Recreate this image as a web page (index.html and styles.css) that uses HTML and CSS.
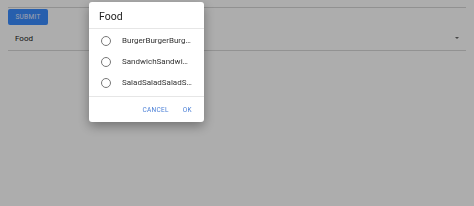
FILE: index.html
```html
<!DOCTYPE html>
<html lang="en">
<head>
    <meta charset="UTF-8">
    <title>Food picker</title>
    <link rel="stylesheet" href="styles.css">
</head>
<body>

<div class="page">
    <div class="toolbar">
        <button class="submit">Submit</button>
    </div>
    <div class="select-row">
        <span class="select-value">Food</span>
        <span class="select-arrow"></span>
    </div>
</div>

<!-- Dialog sopra la pagina -->
<div class="backdrop">
    <div class="dialog">
        <div class="dialog-title">Food</div>
        <div class="dialog-body">
            <label class="option"><span class="radio"></span><span class="option-label">BurgerBurgerBurgerBurger</span></label>
            <label class="option"><span class="radio"></span><span class="option-label">SandwichSandwichSandwich</span></label>
            <label class="option"><span class="radio"></span><span class="option-label">SaladSaladSaladSalad</span></label>
        </div>
        <div class="dialog-actions">
            <button class="flat">Cancel</button>
            <button class="flat">OK</button>
        </div>
    </div>
</div>

</body>
</html>
```

FILE: styles.css
```css
body {
    margin: 7px 8px 8px;
    font-family: Roboto, "Liberation Sans", Arial, sans-serif;
    background-color: #fff;
    color: #222;
}

.page {
    border-top: 1px solid #d6d6d6;
    height: 190px;
}

.toolbar {
    display: flex;
    padding-top: 1px;
}

.submit {
    background-color: #3a8cff;
    color: #e8efff;
    border: none;
    border-radius: 2px;
    width: 40px;
    height: 16px;
    padding: 0;
    font-family: inherit;
    font-size: 6.5px;
    letter-spacing: 0.3px;
    text-transform: uppercase;
}

.select-row {
    display: flex;
    align-items: center;
    justify-content: space-between;
    height: 24px;
    padding: 1px 7px 0;
    border-bottom: 1px solid #d8d8d8;
    font-size: 8px;
}

.select-arrow {
    width: 0;
    height: 0;
    border-left: 2.5px solid transparent;
    border-right: 2.5px solid transparent;
    border-top: 2.5px solid #666;
}

.backdrop {
    position: fixed;
    inset: 0;
    background-color: rgba(0, 0, 0, 0.32);
}

.dialog {
    position: absolute;
    left: 89px;
    top: 2px;
    width: 115px;
    background-color: #fff;
    border-radius: 3px;
    box-shadow: 0 4px 12px rgba(0, 0, 0, 0.35);
}

.dialog-title {
    height: 26px;
    padding-left: 10px;
    line-height: 29px;
    font-size: 10.5px;
    color: #222;
    border-bottom: 1px solid #e6e6e6;
}

.dialog-body {
    padding: 1px 0 3px;
    border-bottom: 1px solid #e6e6e6;
}

.option {
    display: flex;
    align-items: center;
    height: 21px;
    padding-left: 12px;
}

.radio {
    flex: none;
    width: 8px;
    height: 8px;
    border: 1.1px solid #777;
    border-radius: 50%;
}

.option-label {
    margin-left: 11px;
    width: 70px;
    white-space: nowrap;
    overflow: hidden;
    text-overflow: ellipsis;
    font-size: 8px;
    color: #333;
}

.dialog-actions {
    display: flex;
    justify-content: flex-end;
    gap: 8px;
    height: 25px;
    padding-right: 9px;
    align-items: center;
}

.flat {
    background: none;
    border: none;
    padding: 2px 3px;
    font-family: inherit;
    font-size: 6.5px;
    letter-spacing: 0.3px;
    text-transform: uppercase;
    color: #4a7fd6;
}
```
